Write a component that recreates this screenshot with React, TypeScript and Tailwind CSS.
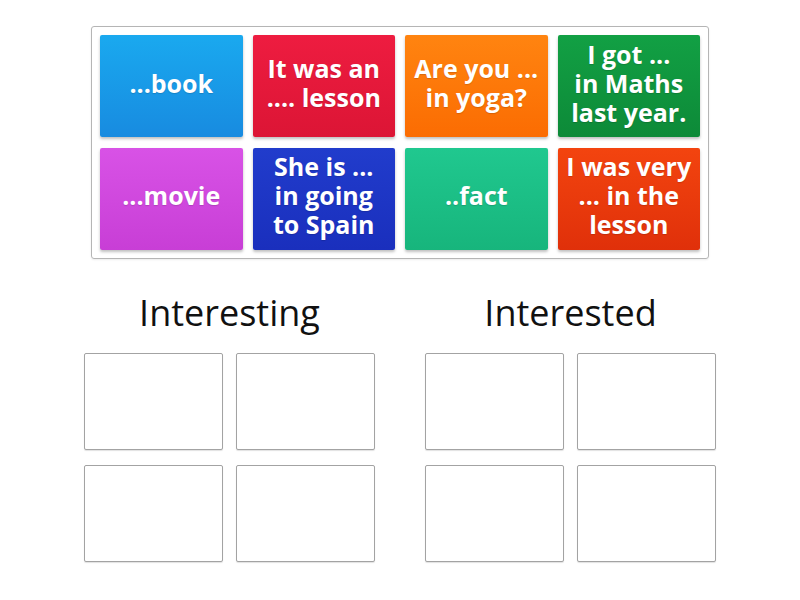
import React from "react";

const tiles: { text: string[]; cls: string }[] = [
  { text: ["...book"], cls: "bg-gradient-to-b from-[#1aa9ef] to-[#188be0]" },
  { text: ["It was an", ".... lesson"], cls: "bg-gradient-to-b from-[#ee1c40] to-[#dc1535]" },
  { text: ["Are you ...", "in yoga?"], cls: "bg-gradient-to-b from-[#ff8410] to-[#fb6c02]" },
  { text: ["I got ...", "in Maths", "last year."], cls: "bg-gradient-to-b from-[#12a044] to-[#0d8a38]" },
  { text: ["...movie"], cls: "bg-gradient-to-b from-[#d852e6] to-[#c83ed6]" },
  { text: ["She is ...", "in going", "to Spain"], cls: "bg-gradient-to-b from-[#213ccc] to-[#1a2fbd]" },
  { text: ["..fact"], cls: "bg-gradient-to-b from-[#20c88f] to-[#17b57c]" },
  { text: ["I was very", "... in the", "lesson"], cls: "bg-gradient-to-b from-[#f3440f] to-[#e0300a]" },
];

function Group({ title }: { title: string }) {
  return (
    <div className="flex flex-col items-center w-[291px]">
      <div className="text-[36px] leading-[49px] text-[#111] font-normal">{title}</div>
      <div className="mt-[16px] grid grid-cols-[139px_139px] gap-x-[13px] gap-y-[15px]">
        {[0, 1, 2, 3].map((i) => (
          <div
            key={i}
            className="h-[97px] border border-[#a3a3a3] rounded-[2px] bg-white shadow-[0_1px_1px_rgba(0,0,0,0.12)]"
          />
        ))}
      </div>
    </div>
  );
}

export default function App() {
  return (
    <div
      className="w-[800px] h-[600px] bg-white overflow-hidden"
      style={{ fontFamily: '"Open Sans", "Noto Sans", sans-serif' }}
    >
      <div className="pt-[26px] pl-[91px]">
        <div className="w-[618px] border border-[#b5b5b5] rounded-[3px] p-[8px] shadow-[0_1px_2px_rgba(0,0,0,0.08)]">
          <div className="grid grid-cols-[142.5px_142.5px_142.5px_142.5px] gap-x-[10px] gap-y-[10.5px]">
            {tiles.map((t, i) => (
              <div
                key={i}
                className={`h-[102px] pb-[6px] rounded-[2px] flex flex-col items-center justify-center text-white font-bold text-[25px] leading-[29px] text-center shadow-[0_2px_3px_rgba(0,0,0,0.25)] ${t.cls}`}
                style={{ textShadow: "0 1px 1px rgba(0,0,0,0.15)" }}
              >
                {t.text.map((l, j) => (
                  <div key={j} className="whitespace-nowrap">{l}</div>
                ))}
              </div>
            ))}
          </div>
        </div>
      </div>
      <div className="mt-[29px] pl-[84px] flex gap-x-[50px]">
        <Group title="Interesting" />
        <Group title="Interested" />
      </div>
    </div>
  );
}
